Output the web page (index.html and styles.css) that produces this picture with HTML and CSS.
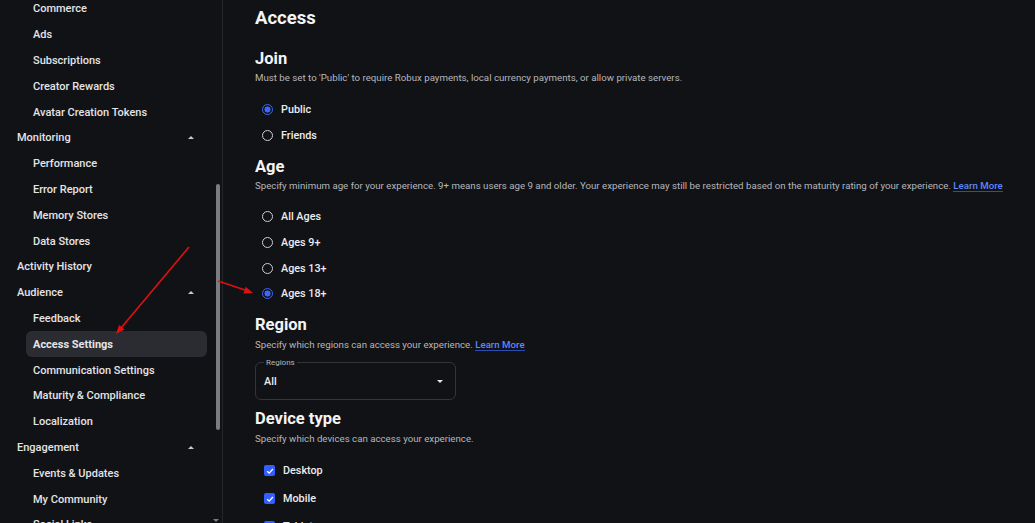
FILE: index.html
```html
<!DOCTYPE html>
<html lang="en">
<head>
    <meta charset="UTF-8">
    <meta name="viewport" content="width=device-width, initial-scale=1.0">
    <title>Access Settings</title>
    <link rel="stylesheet" href="styles.css">
</head>
<body>

    <aside class="sidebar">
        <ul class="nav">
            <li class="nav-item">Commerce</li>
            <li class="nav-item">Ads</li>
            <li class="nav-item">Subscriptions</li>
            <li class="nav-item">Creator Rewards</li>
            <li class="nav-item">Avatar Creation Tokens</li>
            <li class="nav-section">Monitoring <span class="chevron"></span></li>
            <li class="nav-item">Performance</li>
            <li class="nav-item">Error Report</li>
            <li class="nav-item">Memory Stores</li>
            <li class="nav-item">Data Stores</li>
            <li class="nav-section">Activity History</li>
            <li class="nav-section">Audience <span class="chevron"></span></li>
            <li class="nav-item">Feedback</li>
            <li class="nav-item active">Access Settings</li>
            <li class="nav-item">Communication Settings</li>
            <li class="nav-item">Maturity &amp; Compliance</li>
            <li class="nav-item">Localization</li>
            <li class="nav-section">Engagement <span class="chevron"></span></li>
            <li class="nav-item">Events &amp; Updates</li>
            <li class="nav-item">My Community</li>
            <li class="nav-item">Social Links</li>
        </ul>
        <!-- overlay scrollbar -->
        <div class="scroll-thumb"></div>
        <div class="scroll-arrow"></div>
    </aside>

    <main class="content">
        <h1 class="page-title">Access</h1>

        <section class="block">
            <h2>Join</h2>
            <p class="desc">Must be set to 'Public' to require Robux payments, local currency payments, or allow private servers.</p>
            <ul class="options">
                <li class="option"><span class="radio checked"></span>Public</li>
                <li class="option"><span class="radio"></span>Friends</li>
            </ul>
        </section>

        <section class="block age">
            <h2>Age</h2>
            <p class="desc">Specify minimum age for your experience. 9+ means users age 9 and older. Your experience may still be restricted based on the maturity rating of your experience. <a class="link">Learn More</a></p>
            <ul class="options">
                <li class="option"><span class="radio"></span>All Ages</li>
                <li class="option"><span class="radio"></span>Ages 9+</li>
                <li class="option"><span class="radio"></span>Ages 13+</li>
                <li class="option"><span class="radio checked"></span>Ages 18+</li>
            </ul>
        </section>

        <section class="block region">
            <h2>Region</h2>
            <p class="desc">Specify which regions can access your experience. <a class="link">Learn More</a></p>
            <fieldset class="select">
                <legend>Regions</legend>
                <div class="select-value">All <span class="caret"></span></div>
            </fieldset>
        </section>

        <section class="block device">
            <h2>Device type</h2>
            <p class="desc">Specify which devices can access your experience.</p>
            <ul class="checks">
                <li class="check-row"><span class="checkbox"><svg viewBox="0 0 10 10" width="10" height="10"><path d="M2.2 5.2 L4.2 7.1 L7.9 3" fill="none" stroke="#fff" stroke-width="1.3"/></svg></span>Desktop</li>
                <li class="check-row"><span class="checkbox"><svg viewBox="0 0 10 10" width="10" height="10"><path d="M2.2 5.2 L4.2 7.1 L7.9 3" fill="none" stroke="#fff" stroke-width="1.3"/></svg></span>Mobile</li>
                <li class="check-row"><span class="checkbox"><svg viewBox="0 0 10 10" width="10" height="10"><path d="M2.2 5.2 L4.2 7.1 L7.9 3" fill="none" stroke="#fff" stroke-width="1.3"/></svg></span>Tablet</li>
            </ul>
        </section>
    </main>

    <!-- red annotation arrows drawn over the screenshot -->
    <svg class="annotations" width="1035" height="523" viewBox="0 0 1035 523">
        <line x1="189" y1="247" x2="121" y2="328" stroke="#e01010" stroke-width="1.6"/>
        <polygon points="116,334 124.5,329.4 119.1,324.9" fill="#e01010"/>
        <line x1="218" y1="281" x2="245" y2="290" stroke="#e01010" stroke-width="1.6"/>
        <polygon points="253,293 243.4,293.4 245.6,286.8" fill="#e01010"/>
    </svg>

</body>
</html>
```

FILE: styles.css
```css
body {
    font-family: 'Roboto', 'Noto Sans', sans-serif;
    background-color: #111216;
    color: #e6e6e9;
    margin: 0;
    display: flex;
    height: 100vh;
    overflow: hidden;
}

ul {
    list-style: none;
    margin: 0;
    padding: 0;
}

/* sidebar */
.sidebar {
    position: relative;
    width: 222px;
    flex-shrink: 0;
    border-right: 1px solid #25262b;
    overflow: hidden;
}

.nav {
    margin-top: -4px;
}

.nav-item,
.nav-section {
    height: 25.8px;
    display: flex;
    align-items: center;
    font-size: 11px;
    font-weight: 500;
    color: #e4e4e7;
}

.nav-item {
    margin: 0 15px 0 26px;
    padding-left: 7px;
    border-radius: 6px;
}

.nav-item.active {
    background-color: #2b2c31;
    font-weight: 700;
}

.nav-section {
    padding: 0 28px 0 17px;
    justify-content: space-between;
}

.chevron {
    width: 0;
    height: 0;
    border-left: 3px solid transparent;
    border-right: 3px solid transparent;
    border-bottom: 3px solid #c9c9cd;
}

.scroll-thumb {
    position: absolute;
    right: 2px;
    top: 184px;
    width: 4px;
    height: 246px;
    border-radius: 2px;
    background-color: #7b7b80;
}

.scroll-arrow {
    position: absolute;
    right: 3px;
    bottom: 1px;
    width: 0;
    height: 0;
    border-left: 3px solid transparent;
    border-right: 3px solid transparent;
    border-top: 3px solid #7b7b80;
}

/* main content */
.content {
    flex: 1;
    padding: 6px 0 0 32px;
}

.page-title {
    margin: 0;
    font-size: 18.5px;
    line-height: 24px;
    font-weight: 700;
    color: #f4f4f5;
}

h2 {
    margin: 0;
    font-size: 16.5px;
    line-height: 20px;
    font-weight: 700;
    color: #f4f4f5;
}

.block {
    margin-top: 19px;
}

.age {
    margin-top: 9px;
}

.region {
    margin-top: 8px;
}

.device {
    margin-top: 9px;
}

.desc {
    margin: 2px 0 0;
    font-size: 9.7px;
    line-height: 14px;
    color: #b6b6bb;
}

.region .desc,
.device .desc {
    margin-top: 3px;
}

.link {
    color: #5b88ff;
    font-weight: 500;
    border-bottom: 1px solid #2c4cb5;
}

.options {
    margin-top: 12px;
    padding-left: 7px;
}

.age .options {
    margin-top: 11px;
}

.option {
    height: 25.6px;
    display: flex;
    align-items: center;
    gap: 8px;
    font-size: 10.8px;
    font-weight: 500;
    color: #ececee;
}

.radio {
    width: 11px;
    height: 11px;
    box-sizing: border-box;
    border: 1.5px solid #cfcfd3;
    border-radius: 50%;
}

.radio.checked {
    border-color: #3b66ff;
    background: radial-gradient(circle, #3b66ff 0 2.8px, transparent 3.3px);
}

/* regions dropdown */
.select {
    margin: 6px 0 0;
    padding: 0 12px 3px 8px;
    width: 201px;
    box-sizing: border-box;
    border: 1px solid #34353a;
    border-radius: 6px;
    min-width: 0;
}

.select legend {
    padding: 0 2px;
    font-size: 8px;
    line-height: 10px;
    color: #b6b6bb;
}

.select-value {
    height: 28px;
    display: flex;
    align-items: center;
    justify-content: space-between;
    font-size: 10.8px;
    font-weight: 500;
    color: #ececee;
}

.caret {
    width: 0;
    height: 0;
    border-left: 3px solid transparent;
    border-right: 3px solid transparent;
    border-top: 3px solid #e6e6e9;
}

/* device checkboxes */
.checks {
    margin-top: 11px;
    padding-left: 9px;
}

.check-row {
    height: 28px;
    display: flex;
    align-items: center;
    gap: 8px;
    font-size: 10.8px;
    font-weight: 500;
    color: #ececee;
}

.checkbox {
    width: 11px;
    height: 11px;
    border-radius: 2px;
    background-color: #335fff;
    display: flex;
    align-items: center;
    justify-content: center;
}

.annotations {
    position: absolute;
    left: 0;
    top: 0;
    pointer-events: none;
}
```
